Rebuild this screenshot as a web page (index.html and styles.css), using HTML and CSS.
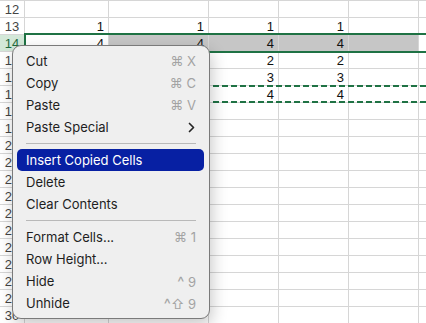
FILE: index.html
```html
<!DOCTYPE html>
<html>
    <head>
        <meta charset="utf-8">
        <title>Sheet</title>
        <link rel="stylesheet" href="styles.css">
    </head>
    <body>
        <div class="sheet">
            <div class="row"><span class="rh">12</span><span class="c"></span><span class="c"></span><span class="c"></span><span class="c"></span><span class="c"></span><span class="c"></span></div>
            <div class="row"><span class="rh">13</span><span class="c">1</span><span class="c">1</span><span class="c">1</span><span class="c">1</span><span class="c"></span><span class="c"></span></div>
            <div class="row picked"><span class="rh">14</span><span class="c">4</span><span class="c">4</span><span class="c">4</span><span class="c">4</span><span class="c"></span><span class="c"></span></div>
            <div class="row"><span class="rh">15</span><span class="c">2</span><span class="c">2</span><span class="c">2</span><span class="c">2</span><span class="c"></span><span class="c"></span></div>
            <div class="row"><span class="rh">16</span><span class="c">3</span><span class="c">3</span><span class="c">3</span><span class="c">3</span><span class="c"></span><span class="c"></span></div>
            <div class="row"><span class="rh">17</span><span class="c">4</span><span class="c">4</span><span class="c">4</span><span class="c">4</span><span class="c"></span><span class="c"></span></div>
            <div class="row"><span class="rh">18</span><span class="c"></span><span class="c"></span><span class="c"></span><span class="c"></span><span class="c"></span><span class="c"></span></div>
            <div class="row"><span class="rh">19</span><span class="c"></span><span class="c"></span><span class="c"></span><span class="c"></span><span class="c"></span><span class="c"></span></div>
            <div class="row"><span class="rh">20</span><span class="c"></span><span class="c"></span><span class="c"></span><span class="c"></span><span class="c"></span><span class="c"></span></div>
            <div class="row"><span class="rh">21</span><span class="c"></span><span class="c"></span><span class="c"></span><span class="c"></span><span class="c"></span><span class="c"></span></div>
            <div class="row"><span class="rh">22</span><span class="c"></span><span class="c"></span><span class="c"></span><span class="c"></span><span class="c"></span><span class="c"></span></div>
            <div class="row"><span class="rh">23</span><span class="c"></span><span class="c"></span><span class="c"></span><span class="c"></span><span class="c"></span><span class="c"></span></div>
            <div class="row"><span class="rh">24</span><span class="c"></span><span class="c"></span><span class="c"></span><span class="c"></span><span class="c"></span><span class="c"></span></div>
            <div class="row"><span class="rh">25</span><span class="c"></span><span class="c"></span><span class="c"></span><span class="c"></span><span class="c"></span><span class="c"></span></div>
            <div class="row"><span class="rh">26</span><span class="c"></span><span class="c"></span><span class="c"></span><span class="c"></span><span class="c"></span><span class="c"></span></div>
            <div class="row"><span class="rh">27</span><span class="c"></span><span class="c"></span><span class="c"></span><span class="c"></span><span class="c"></span><span class="c"></span></div>
            <div class="row"><span class="rh">28</span><span class="c"></span><span class="c"></span><span class="c"></span><span class="c"></span><span class="c"></span><span class="c"></span></div>
            <div class="row"><span class="rh">29</span><span class="c"></span><span class="c"></span><span class="c"></span><span class="c"></span><span class="c"></span><span class="c"></span></div>
            <div class="row"><span class="rh">30</span><span class="c"></span><span class="c"></span><span class="c"></span><span class="c"></span><span class="c"></span><span class="c"></span></div>

            <div class="sel-box"></div>
            <div class="ants ants-top"></div>
            <div class="ants ants-bottom"></div>

            <div class="ctx-menu">
                <div class="item"><span>Cut</span><span class="key">⌘ X</span></div>
                <div class="item"><span>Copy</span><span class="key">⌘ C</span></div>
                <div class="item"><span>Paste</span><span class="key">⌘ V</span></div>
                <div class="item"><span>Paste Special</span>
                    <svg class="chev" width="7" height="11" viewBox="0 0 7 11"><polyline points="1.5,1.5 5.5,5.5 1.5,9.5" fill="none" stroke="#262626" stroke-width="1.7" stroke-linecap="round" stroke-linejoin="round"/></svg>
                </div>
                <div class="sep"></div>
                <div class="item hot"><span>Insert Copied Cells</span></div>
                <div class="item"><span>Delete</span></div>
                <div class="item"><span>Clear Contents</span></div>
                <div class="sep"></div>
                <div class="item"><span>Format Cells...</span><span class="key">⌘ 1</span></div>
                <div class="item"><span>Row Height...</span></div>
                <div class="item"><span>Hide</span><span class="key"><span class="caret">^</span> 9</span></div>
                <div class="item"><span>Unhide</span><span class="key"><span class="caret">^</span>⇧ 9</span></div>
            </div>
        </div>
    </body>
</html>
```

FILE: styles.css
```css
html, body {
    margin: 0;
    background-color: white;
    overflow: hidden;
}
.sheet {
    position: relative;
    width: 426px;
    height: 323px;
    overflow: hidden;
    border-top: 1px solid #d6d6d6;
    font-family: "Liberation Sans", Arial, sans-serif;
    font-size: 13px;
    color: #111;
}
.row {
    display: grid;
    grid-template-columns: 25px 84px 100px 70px 70px 70px 1fr;
    height: 17px;
}
.row span {
    box-sizing: border-box;
    height: 17px;
    line-height: 17px;
    border-bottom: 1px solid #d6d6d6;
    border-right: 1px solid #d6d6d6;
}
.row .rh {
    text-align: center;
    color: #444;
    overflow: hidden;
    white-space: nowrap;
}
.row .c {
    text-align: right;
    padding-right: 4px;
}
.row .c:last-child {
    border-right: none;
}
.picked .rh {
    background-color: #d3e8d8;
    color: #1e6b3f;
}
.picked .c {
    background-color: #c6c6c6;
}
.picked .c:nth-child(2),
.picked .c:nth-child(7) {
    background-color: white;
}
.sel-box {
    position: absolute;
    left: 24px;
    right: 0;
    top: 32px;
    height: 16px;
    border: 2px solid #1f7244;
    border-right: none;
}
.ants {
    position: absolute;
    left: 24px;
    right: 0;
    height: 2px;
    background: repeating-linear-gradient(90deg, #1f7244 0 6px, transparent 6px 9px);
}
.ants-top {
    top: 84px;
}
.ants-bottom {
    top: 100px;
}
.ctx-menu {
    position: absolute;
    left: 12px;
    top: 44px;
    width: 198px;
    box-sizing: border-box;
    padding: 4px 5px 4px 4px;
    background-color: #efefef;
    border: 1px solid #7a7a7a;
    border-radius: 9px;
    box-shadow: 2px 6px 16px rgba(0, 0, 0, 0.22);
    font-family: "Inter", "Liberation Sans", sans-serif;
    font-size: 13px;
    color: #1e1e1e;
}
.item {
    display: flex;
    align-items: center;
    justify-content: space-between;
    height: 22px;
    padding: 0 8px 0 9px;
    border-radius: 5px;
}
.item .key {
    color: #a3a3a3;
    font-family: "Inter", "DejaVu Sans", sans-serif;
}
.item .caret {
    font-size: 15px;
}
.item.hot {
    background-color: #0720a3;
    color: white;
}
.chev {
    margin-right: 1px;
}
.sep {
    height: 11px;
    display: flex;
    align-items: center;
    padding: 0 8px 0 9px;
}
.sep::after {
    content: "";
    flex: 1;
    height: 1px;
    background-color: #b9b9b9;
}
```
